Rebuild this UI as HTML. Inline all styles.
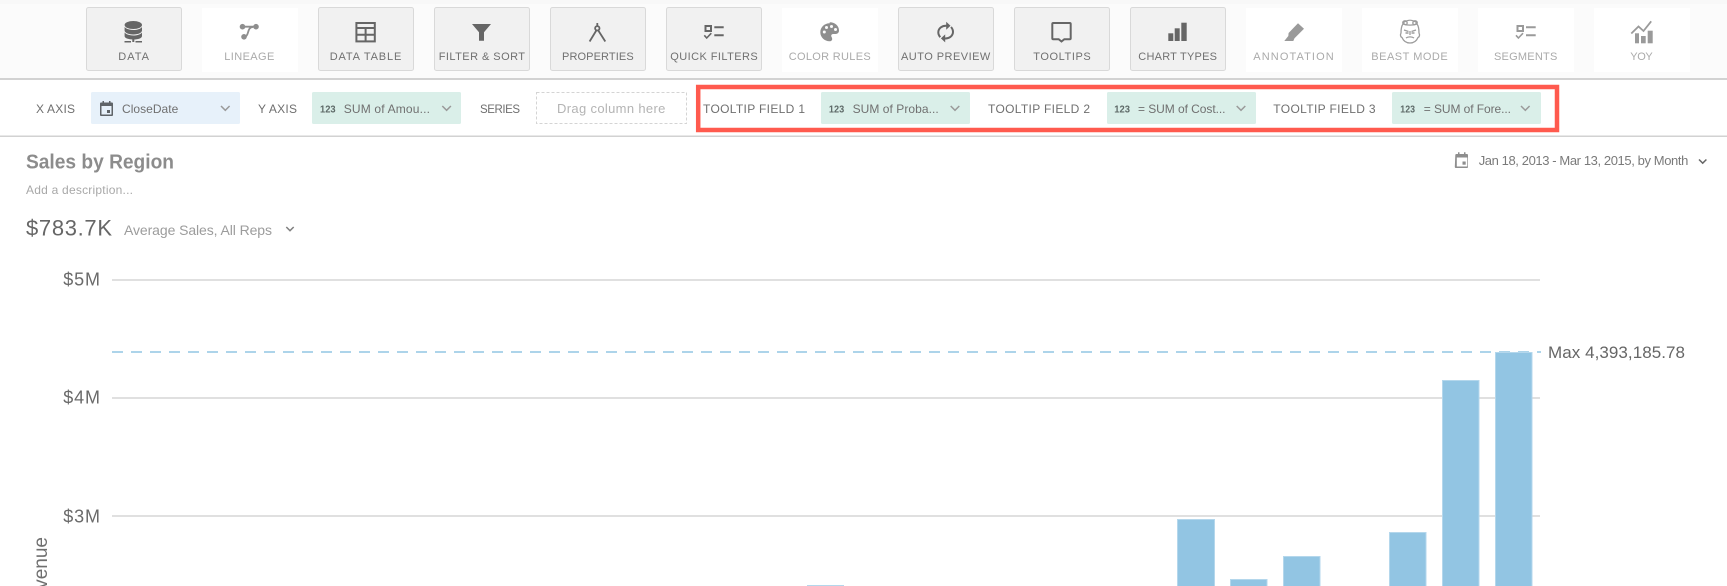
<!DOCTYPE html>
<html><head><meta charset="utf-8"><title>Sales by Region</title>
<style>
html,body{margin:0;padding:0;width:1727px;height:586px;overflow:hidden;background:#fff}
svg{display:block}
text{font-family:"Liberation Sans",sans-serif}
.l{font-size:11px;fill:#707070}
.d{font-size:11px;fill:#aaa}
.a{font-size:12px;fill:#6f6f6f}
.c{font-size:12px;fill:#707070}
.n{font-size:10px;font-weight:bold;fill:#5e6a68}
.y{font-size:18px;fill:#6a6a6a}
.on{fill:#f1f1f1;stroke:#d9d9d9;stroke-width:1}
.off{fill:#fff}
.chev{fill:none;stroke:#9a9a9a;stroke-width:1.5}
.grid{stroke:#e0e0e0;stroke-width:2}
.bar{fill:#92c5e3;stroke:#b4d7ec;stroke-width:1}
</style></head><body>
<svg width="1727" height="586" viewBox="0 0 1727 586" xmlns="http://www.w3.org/2000/svg">
<rect width="1727" height="79" fill="#fbfbfb"/>
<rect width="1727" height="4" fill="#f8f8f8"/>
<rect y="78" width="1727" height="2" fill="#d2d2d2"/>
<rect y="135.500" width="1727" height="1.500" fill="#d2d2d2"/>

<!-- toolbar buttons -->
<rect class="on" x="86.500" y="7.500" width="95" height="63" rx="2"/>
<rect class="off" x="202" y="8" width="96" height="64"/>
<rect class="on" x="318.500" y="7.500" width="95" height="63" rx="2"/>
<rect class="on" x="434.500" y="7.500" width="95" height="63" rx="2"/>
<rect class="on" x="550.500" y="7.500" width="95" height="63" rx="2"/>
<rect class="on" x="666.500" y="7.500" width="95" height="63" rx="2"/>
<rect class="off" x="782" y="8" width="96" height="64"/>
<rect class="on" x="898.500" y="7.500" width="95" height="63" rx="2"/>
<rect class="on" x="1014.500" y="7.500" width="95" height="63" rx="2"/>
<rect class="on" x="1130.500" y="7.500" width="95" height="63" rx="2"/>
<rect class="off" x="1246" y="8" width="96" height="64"/>
<rect class="off" x="1362" y="8" width="96" height="64"/>
<rect class="off" x="1478" y="8" width="96" height="64"/>
<rect class="off" x="1594" y="8" width="96" height="64"/>

<!-- button labels -->
<text class="l" x="118.300" y="60" textLength="30.700">DATA</text>
<text class="d" x="224.300" y="60" textLength="50">LINEAGE</text>
<text class="l" x="329.700" y="60" textLength="71.600">DATA TABLE</text>
<text class="l" x="438.700" y="60" textLength="86.300">FILTER &amp; SORT</text>
<text class="l" x="562" y="60" textLength="71.700">PROPERTIES</text>
<text class="l" x="670.300" y="60" textLength="87.400">QUICK FILTERS</text>
<text class="d" x="788.700" y="60" textLength="82">COLOR RULES</text>
<text class="l" x="901" y="60" textLength="89.300">AUTO PREVIEW</text>
<text class="l" x="1033.300" y="60" textLength="57.400">TOOLTIPS</text>
<text class="l" x="1138.300" y="60" textLength="78.700">CHART TYPES</text>
<text class="d" x="1253.300" y="60" textLength="80.400">ANNOTATION</text>
<text class="d" x="1371.300" y="60" textLength="76.400">BEAST MODE</text>
<text class="d" x="1494" y="60" textLength="63.300">SEGMENTS</text>
<text class="d" x="1630.300" y="60" textLength="22.400">YOY</text>

<!-- data icon -->
<g fill="#666">
<ellipse cx="133.300" cy="25" rx="8.700" ry="4"/>
<path d="M124.600 27v3.500c0 2.200 3.900 4 8.700 4s8.700-1.800 8.700-4V27c-1.600 2-5 3-8.700 3s-7.100-1-8.700-3z"/>
<path d="M124.600 32.500V36c0 2.200 3.900 3.500 8.700 3.500s8.700-1.300 8.700-3.500v-3.500c-1.600 2-5 3-8.700 3s-7.100-1-8.700-3z"/>
<rect x="132.300" y="38.500" width="2" height="3.500"/>
<rect x="124.500" y="41" width="6.500" height="1.500"/><rect x="135.500" y="41" width="6.500" height="1.500"/>
</g>
<!-- lineage -->
<g fill="#8e8e8e">
<circle cx="242.500" cy="26.700" r="2.800"/><circle cx="256" cy="26.700" r="2.800"/><circle cx="244" cy="36.800" r="2.800"/>
<path d="M242.500 26.700H256M253 27c-3.500 0-4.300 3-5 5.500s-1.600 4.500-4 4.800" fill="none" stroke="#8e8e8e" stroke-width="1.800"/>
</g>
<!-- table -->
<g fill="none" stroke="#666" stroke-width="2">
<rect x="356.400" y="23" width="18.400" height="18.400"/>
<path d="M356.400 28h18.400M356.400 34.700h18.400M365.600 28v13.400"/>
</g>
<!-- funnel -->
<path d="M472 24h19l-7 8.300v8.400h-5v-8.400z" fill="#666"/>
<!-- compass -->
<g fill="none" stroke="#666" stroke-width="1.800">
<circle cx="597.300" cy="28.300" r="2.200"/>
<path d="M596.300 30.500l-6.700 11M598.300 30.500l7 11M597.300 26v-3"/>
</g>
<!-- quick filters -->
<g fill="none" stroke="#666" stroke-width="2">
<rect x="705.500" y="26" width="5.500" height="5"/>
<path d="M714.300 27.300h9.400M714.300 35.300h9.400"/>
<path d="M704.300 35.300l2.400 2.700 4.600-4.800" stroke-width="1.600"/>
</g>
<!-- palette -->
<path d="M829.700 23.300c-5.300 0-9.400 4-9.400 9s4.100 9 9.400 9c1.500 0 2.500-1 2.500-2.300 0-1.500-1-1.900-1-3.200 0-1.100.9-1.800 2-1.800h2.300c2.200 0 3.500-1.600 3.500-3.500 0-4.500-4-8.200-9.300-8.200z" fill="#8e8e8e"/>
<g fill="#fbfbfb"><circle cx="824.300" cy="32" r="1.500"/><circle cx="826.500" cy="27.500" r="1.500"/><circle cx="831.500" cy="26.500" r="1.500"/><circle cx="835.500" cy="29.500" r="1.500"/></g>
<!-- auto preview -->
<g fill="none" stroke="#666" stroke-width="2">
<path d="M947 25.800c-4.600-.5-8.700 2.300-8.700 6.500 0 1.900.7 3.500 2 4.900"/>
<path d="M944.300 38.400c4.600.5 8.700-2.300 8.700-6.500 0-1.900-.7-3.500-2-4.900"/>
</g>
<path d="M946.200 21.700l4.300 4-4.300 4zM945.200 34.400l-4.300 4 4.300 4z" fill="#666"/>
<!-- tooltip -->
<path d="M1053.300 23h16.400a1 1 0 0 1 1 1v14.200a1 1 0 0 1-1 1h-5.400l-2.800 2.300-2.800-2.300h-5.400a1 1 0 0 1-1-1V24a1 1 0 0 1 1-1z" fill="none" stroke="#666" stroke-width="2"/>
<!-- chart types -->
<g fill="#666"><rect x="1168.300" y="33.300" width="5" height="7.700"/><rect x="1174.700" y="28.300" width="5" height="12.700"/><rect x="1181.300" y="22.700" width="5.400" height="18.300"/></g>
<!-- annotation -->
<path d="M1298 23.300l6 5.500-9.500 9.500-1.200 2.700h-9l4-5 .3-3z" fill="#9a9a9a"/>
<!-- beast mode -->
<g fill="none" stroke="#9c9c9c" stroke-width="1.300">
<path d="M1403 24c-1-3 1.500-3.500 3.500-3 2-1 5-1 7 0 2-.5 4.500 0 3.500 3 1.500 2 2 6 2 9 1 2 .5 4-1 4.500-1.500 3.500-4 5.500-8 5.500s-6.500-2-8-5.500c-1.500-.5-2-2.500-1-4.500 0-3 .5-7 2-9z"/>
<path d="M1403 24c4 1.500 10 1.500 14 0M1404 30l4.500 1.500M1416 30l-4.500 1.500M1406 38c2-1.500 6-1.500 8 0M1410 31v4"/>
<circle cx="1405.500" cy="23" r="1.700"/><circle cx="1414.500" cy="23" r="1.700"/>
<path d="M1405.500 33h3M1411.500 33h3" stroke-width="1.600"/>
</g>
<!-- segments -->
<g fill="none" stroke="#9a9a9a" stroke-width="2">
<rect x="1517.500" y="26" width="5.500" height="5"/>
<path d="M1526 27.300h9.700M1526 35.300h9.700"/>
<path d="M1516 35.300l2.400 2.700 4.600-4.800" stroke-width="1.600"/>
</g>
<!-- yoy -->
<g fill="#9a9a9a"><rect x="1635" y="33.300" width="4" height="10"/><rect x="1641" y="36" width="4.700" height="7.300"/><rect x="1647.700" y="30.700" width="5" height="12.600"/></g>
<path d="M1631.300 33.500l7.200-7 5 4.500 7.700-9.700" fill="none" stroke="#9a9a9a" stroke-width="1.800"/>

<!-- row 2 -->
<text class="a" x="36" y="113" textLength="39">X AXIS</text>
<rect x="91" y="92" width="149" height="32" rx="1.500" fill="#e7f1fa"/>
<path d="M100 103.500a1 1 0 0 1 1-1h1.500v-1.500h1.500v1.500h5v-1.500h1.500v1.500h1.500a1 1 0 0 1 1 1V115a1 1 0 0 1-1 1h-11a1 1 0 0 1-1-1z" fill="#5f6468"/>
<rect x="101.500" y="106" width="10" height="8.500" fill="#e7f1fa"/><rect x="107" y="110" width="3" height="3" fill="#5f6468"/>
<text class="c" x="122" y="113" textLength="56.300">CloseDate</text>
<path class="chev" d="M221 106l4.300 4.300 4.300-4.300"/>
<text class="a" x="258" y="113" textLength="39">Y AXIS</text>
<rect x="312" y="92" width="149" height="32" rx="1.500" fill="#daefe9"/>
<text class="n" x="320" y="112.500" textLength="15.600" lengthAdjust="spacingAndGlyphs">123</text>
<text class="c" x="343.700" y="113" textLength="86.300">SUM of Amou...</text>
<path class="chev" d="M442.300 106l4.300 4.300 4.300-4.300"/>
<text x="480" y="113" font-size="11.500" fill="#6f6f6f" textLength="40">SERIES</text>
<rect x="536.500" y="92.500" width="150" height="31" fill="#fff" stroke="#d4d4d4" stroke-dasharray="3 2"/>
<text x="557" y="113" textLength="108.400" font-size="13" fill="#b4b4b4">Drag column here</text>

<rect x="698.200" y="87" width="858.800" height="43" fill="none" stroke="#ff5a4e" stroke-width="4.500"/>
<text class="a" x="703" y="113" textLength="102">TOOLTIP FIELD 1</text>
<rect x="821" y="92" width="149" height="32" rx="1.500" fill="#daefe9"/>
<text class="n" x="828.900" y="112.500" textLength="15.300" lengthAdjust="spacingAndGlyphs">123</text>
<text class="c" x="852.600" y="113" textLength="86.100">SUM of Proba...</text>
<path class="chev" d="M950.700 106l4.300 4.300 4.300-4.300"/>
<text class="a" x="988" y="113" textLength="102">TOOLTIP FIELD 2</text>
<rect x="1107" y="92" width="149" height="32" rx="1.500" fill="#daefe9"/>
<text class="n" x="1114.300" y="112.500" textLength="15.700" lengthAdjust="spacingAndGlyphs">123</text>
<text class="c" x="1138" y="113" textLength="87.500">= SUM of Cost...</text>
<path class="chev" d="M1236.700 106l4.300 4.300 4.300-4.300"/>
<text class="a" x="1273.300" y="113" textLength="102.300">TOOLTIP FIELD 3</text>
<rect x="1392" y="92" width="149" height="32" rx="1.500" fill="#daefe9"/>
<text class="n" x="1400.300" y="112.500" textLength="14.700" lengthAdjust="spacingAndGlyphs">123</text>
<text class="c" x="1423.800" y="113" textLength="87.200">= SUM of Fore...</text>
<path class="chev" d="M1521 106l4.300 4.300 4.300-4.300"/>

<!-- heading -->
<text x="26" y="168.300" font-size="20" font-weight="bold" fill="#8c8c8c" textLength="148" lengthAdjust="spacingAndGlyphs">Sales by Region</text>
<text x="26" y="194" font-size="12" fill="#a8a8a8" textLength="107">Add a description...</text>
<text x="26" y="235.700" font-size="22" fill="#666" textLength="86">$783.7K</text>
<text x="124" y="235" font-size="14" fill="#9c9c9c" textLength="148">Average Sales, All Reps</text>
<path d="M286.300 227l3.700 3.700 3.700-3.700" fill="none" stroke="#808080" stroke-width="1.500"/>

<path d="M1455.300 155a1 1 0 0 1 1-1h1.700v-1.700h1.500v1.700h4.500v-1.700h1.500v1.700h1.500a1 1 0 0 1 1 1v12a1 1 0 0 1-1 1h-11.200a1 1 0 0 1-1-1z" fill="#8e8e8e"/>
<rect x="1456.800" y="157.500" width="10.500" height="9" fill="#fff"/><rect x="1462.500" y="161.500" width="3.200" height="3.200" fill="#8e8e8e"/>
<text x="1478.700" y="165" font-size="13" fill="#7a7a7a" textLength="209.600">Jan 18, 2013 - Mar 13, 2015, by Month</text>
<path d="M1699 159.500l3.700 3.700 3.700-3.700" fill="none" stroke="#666" stroke-width="1.500"/>

<!-- chart -->
<line class="grid" x1="112" y1="280" x2="1540" y2="280"/>
<line class="grid" x1="112" y1="398" x2="1540" y2="398"/>
<line class="grid" x1="112" y1="516" x2="1540" y2="516"/>
<text class="y" x="63.300" y="285.700" textLength="36.700">$5M</text>
<text class="y" x="63.300" y="403.700" textLength="36.700">$4M</text>
<text class="y" x="63.300" y="522.700" textLength="36.700">$3M</text>
<text transform="translate(47 537) rotate(-90)" text-anchor="end" font-size="19" fill="#6f6f6f">Revenue</text>
<line x1="112" y1="352" x2="1541" y2="352" stroke="#92c5e3" stroke-width="1.500" stroke-dasharray="11 8"/>
<text x="1548" y="358" font-size="17" fill="#666" textLength="137">Max 4,393,185.78</text>
<rect class="bar" x="807.500" y="585.500" width="36" height="3"/>
<rect class="bar" x="1177.500" y="519.500" width="37" height="70"/>
<rect class="bar" x="1230.500" y="579.500" width="36.500" height="10"/>
<rect class="bar" x="1283.500" y="556.500" width="36.500" height="33"/>
<rect class="bar" x="1389.500" y="532.500" width="36.500" height="57"/>
<rect class="bar" x="1442.500" y="380.500" width="36.500" height="209"/>
<rect class="bar" x="1495.500" y="352.500" width="36.500" height="237"/>
</svg>
</body></html>
